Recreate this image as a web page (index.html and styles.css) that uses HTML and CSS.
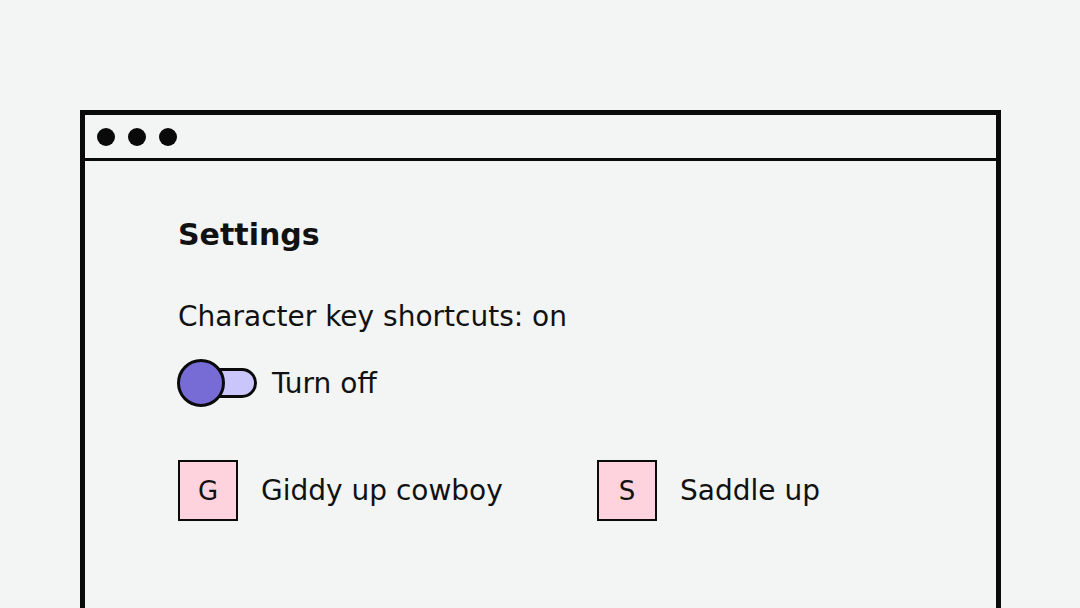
FILE: index.html
```html
<!DOCTYPE html>
<html lang="en">
<head>
    <meta charset="UTF-8">
    <meta name="viewport" content="width=device-width, initial-scale=1.0">
    <title>Settings</title>
    <link rel="stylesheet" href="styles.css">
</head>
<body>
    <div class="window">
        <div class="titlebar">
            <span class="dot"></span>
            <span class="dot"></span>
            <span class="dot"></span>
        </div>
        <div class="content">
            <h2 class="heading">Settings</h2>
            <p class="status">Character key shortcuts: <span id="state">on</span></p>
            <div class="toggle-row">
                <div class="switch">
                    <span class="knob"></span>
                    <span class="track"></span>
                </div>
                <span class="toggle-label">Turn off</span>
            </div>
            <div class="keys">
                <div class="key-item">
                    <span class="key">G</span>
                    <span class="key-label">Giddy up cowboy</span>
                </div>
                <div class="key-item">
                    <span class="key">S</span>
                    <span class="key-label">Saddle up</span>
                </div>
            </div>
        </div>
    </div>
</body>
</html>
```

FILE: styles.css
```css
body{
    margin: 0;
    background-color: #f2f5f4;
    font-family: "Comic Sans MS", "DejaVu Sans", sans-serif;
    color: #111;
    overflow: hidden;
}

/* window runs off the bottom of the page, so no bottom edge */
.window{
    box-sizing: border-box;
    width: 921px;
    height: 498px;
    margin-top: 110px;
    margin-left: 80px;
    border: 5px solid #0a0a0a;
    border-bottom: none;
    background-color: #f2f5f4;
}

.titlebar{
    height: 43px;
    border-bottom: 3px solid #0a0a0a;
    display: flex;
    align-items: center;
    gap: 13px;
    padding-left: 12px;
}

.dot{
    width: 18px;
    height: 18px;
    border-radius: 50%;
    background-color: #0a0a0a;
}

.content{
    padding: 56px 0 0 93px;
}

.heading{
    margin: 0;
    font-size: 30px;
    line-height: 36px;
    font-weight: bold;
}

.status{
    margin: 47px 0 0 0;
    font-size: 28px;
    line-height: 34px;
}

.toggle-row{
    margin-top: 25px;
    display: flex;
    align-items: center;
    gap: 15px;
}

.switch{
    display: flex;
    align-items: center;
    margin-left: -1px;
}

.knob{
    box-sizing: border-box;
    width: 48px;
    height: 48px;
    border-radius: 50%;
    border: 3px solid #0a0a0a;
    background-color: #776bd6;
    position: relative;
    z-index: 1;
}

.track{
    box-sizing: border-box;
    width: 67px;
    height: 30px;
    margin-left: -35px;
    border: 3px solid #0a0a0a;
    border-radius: 0 15px 15px 0;
    background-color: #cac6fb;
}

.toggle-label{
    font-size: 28px;
}

.keys{
    margin-top: 53px;
    display: grid;
    grid-template-columns: 419px auto;
    align-items: center;
}

.key-item{
    display: flex;
    align-items: center;
    gap: 23px;
}

.key{
    box-sizing: border-box;
    width: 60px;
    height: 61px;
    border: 2px solid #0a0a0a;
    background-color: #ffd3de;
    display: flex;
    align-items: center;
    justify-content: center;
    font-size: 26px;
}

.key-label{
    font-size: 28px;
}
```
